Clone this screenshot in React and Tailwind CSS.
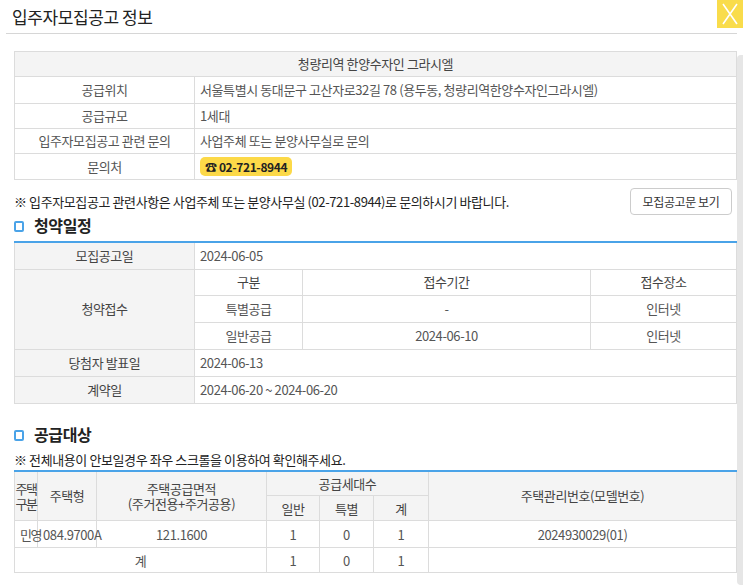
export default function App() {
  const f = { fontFamily: '"Noto Sans CJK KR", "Noto Sans", sans-serif', letterSpacing: '-0.4px' };
  const td = "border border-[#dcdcdc] px-[5px] h-[25px] text-[13px] text-[#555]";
  const th = "border border-[#dcdcdc] bg-[#f4f4f4] text-center h-[25px] text-[13px] text-[#444] font-normal";
  const Icon = () => (
    <span className="inline-block w-[10px] h-[11px] border-2 border-[#4aa3e8] rounded-[2px] bg-white mr-[10px] mt-[8px]" />
  );
  return (
    <div className="w-[743px] h-[585px] bg-white overflow-hidden relative" style={f}>
      <div className="h-[34px] flex items-center pl-[6px] text-[17px] text-[#222] border-b border-[#d6d6d6] ml-[6px] mr-[6px]">
        입주자모집공고 정보
      </div>
      <div className="absolute right-0 top-0 w-[26px] h-[28px] bg-[#f9dc4b] flex items-center justify-center">
        <svg width="18" height="22" viewBox="0 0 18 22"><path d="M2 1 L16 21 M16 1 L2 21" stroke="white" strokeWidth="1.6" /></svg>
      </div>
      <div className="absolute right-0 top-[55px] w-[6px] h-[530px] bg-[#e6e6e6] rounded-l" />
      <div className="pl-[14px] pr-[6px] pt-[17px]">
        <table className="w-full border-collapse table-fixed">
          <colgroup><col className="w-[180px]" /><col /></colgroup>
          <tbody>
            <tr><td colSpan={2} className={th + " h-[23px] text-[#333]"}>청량리역 한양수자인 그라시엘</td></tr>
            <tr className="h-[27px]"><td className={td + " text-center"}>공급위치</td><td className={td}>서울특별시 동대문구 고산자로32길 78 (용두동, 청량리역한양수자인그라시엘)</td></tr>
            <tr><td className={td + " text-center"}>공급규모</td><td className={td}>1세대</td></tr>
            <tr><td className={td + " text-center"}>입주자모집공고 관련 문의</td><td className={td}>사업주체 또는 분양사무실로 문의</td></tr>
            <tr className="h-[26px]"><td className={td + " text-center"}>문의처</td><td className={td}><span className="inline-block bg-[#fcd948] rounded-[5px] px-[5px] h-[19px] leading-[19px] text-[12px] text-[#222] font-bold">☎ 02-721-8944</span></td></tr>
          </tbody>
        </table>
        <div className="flex items-center justify-between mt-[8px] pr-[5px]">
          <span className="text-[13px] text-[#222]">※ 입주자모집공고 관련사항은 사업주체 또는 분양사무실 (02-721-8944)로 문의하시기 바랍니다.</span>
          <span className="border border-[#ccc] rounded-[4px] w-[102px] h-[27px] flex items-center justify-center text-[12px] text-[#333]">모집공고문 보기</span>
        </div>
        <div className="flex items-start text-[16px] font-semibold text-[#222] mt-[-2px] h-[28px]"><Icon />청약일정</div>
        <table className="w-full border-collapse table-fixed border-t-2 border-t-[#4aa3e8]">
          <colgroup><col className="w-[180px]" /><col className="w-[108px]" /><col className="w-[288px]" /><col /></colgroup>
          <tbody>
            <tr className="h-[27px]"><td className={th}>모집공고일</td><td colSpan={3} className={td}>2024-06-05</td></tr>
            <tr className="h-[26px]"><td rowSpan={3} className={th}>청약접수</td><td className={th + " bg-white text-[#333]"}>구분</td><td className={th + " bg-white text-[#333]"}>접수기간</td><td className={th + " bg-white text-[#333]"}>접수장소</td></tr>
            <tr className="h-[27px]"><td className={td + " text-center"}>특별공급</td><td className={td + " text-center"}>-</td><td className={td + " text-center"}>인터넷</td></tr>
            <tr className="h-[27px]"><td className={td + " text-center"}>일반공급</td><td className={td + " text-center"}>2024-06-10</td><td className={td + " text-center"}>인터넷</td></tr>
            <tr className="h-[27px]"><td className={th}>당첨자 발표일</td><td colSpan={3} className={td}>2024-06-13</td></tr>
            <tr className="h-[27px]"><td className={th}>계약일</td><td colSpan={3} className={td}>2024-06-20 ~ 2024-06-20</td></tr>
          </tbody>
        </table>
        <div className="flex items-start text-[16px] font-semibold text-[#222] mt-[18px] h-[28px]"><Icon />공급대상</div>
        <div className="text-[13px] text-[#222] h-[20px]">※ 전체내용이 안보일경우 좌우 스크롤을 이용하여 확인해주세요.</div>
        <table className="w-full border-collapse table-fixed border-t-2 border-t-[#4aa3e8] leading-[15px]">
          <colgroup><col className="w-[23px]" /><col className="w-[59px]" /><col className="w-[170px]" /><col className="w-[53px]" /><col className="w-[54px]" /><col className="w-[55px]" /><col /></colgroup>
          <tbody>
            <tr className="h-[24px]"><td rowSpan={2} className={th + " px-0 whitespace-nowrap text-[12px] tracking-[-1.5px]"}>주택<br />구분</td><td rowSpan={2} className={th}>주택형</td><td rowSpan={2} className={th}>주택공급면적<br />(주거전용+주거공용)</td><td colSpan={3} className={th}>공급세대수</td><td rowSpan={2} className={th}>주택관리번호(모델번호)</td></tr>
            <tr className="h-[24px]"><td className={th}>일반</td><td className={th}>특별</td><td className={th}>계</td></tr>
            <tr className="h-[27px]"><td className={td + " text-center px-0 whitespace-nowrap text-[12px] tracking-[-1.5px]"}>민영</td><td className={td + " text-center px-0 whitespace-nowrap"}>084.9700A</td><td className={td + " text-center"}>121.1600</td><td className={td + " text-center"}>1</td><td className={td + " text-center"}>0</td><td className={td + " text-center"}>1</td><td className={td + " text-center"}>2024930029(01)</td></tr>
            <tr className="h-[25px]"><td colSpan={3} className={td + " text-center"}>계</td><td className={td + " text-center"}>1</td><td className={td + " text-center"}>0</td><td className={td + " text-center"}>1</td><td className={td}></td></tr>
          </tbody>
        </table>
      </div>
    </div>
  );
}
